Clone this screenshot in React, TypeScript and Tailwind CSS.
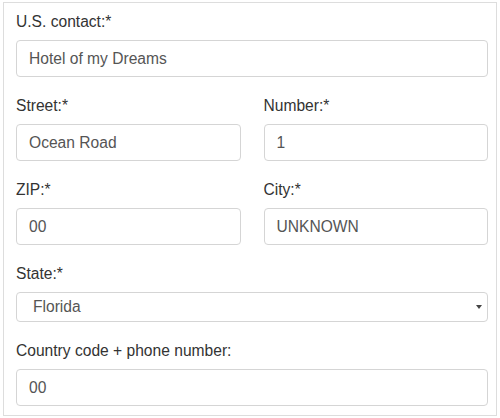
const font = { fontFamily: '"Liberation Sans", Arial, sans-serif' };

function Field({ label, value }: { label: string; value: string }) {
    return (
        <div className="mb-[18px]">
            <label className="block text-[15.6px] leading-[22px] mb-[7px] text-[#333]">{label}</label>
            <input
                readOnly
                value={value}
                className="block w-full h-[37px] px-[12px] border border-[#d5d5d5] rounded-[4px] bg-white text-[15.6px] text-[#555] outline-none"
            />
        </div>
    );
}

export default function App() {
    return (
        <div className="bg-white w-[500px] h-[418px]" style={font}>
            <div className="ml-[3px] mt-[2px] w-[494px] border border-[#ddd] pt-[8px] pl-[12px] pr-[8px] pb-[9px]">
                <Field label="U.S. contact:*" value="Hotel of my Dreams" />
                <div className="grid grid-cols-2 gap-x-[23px]">
                    <Field label="Street:*" value="Ocean Road" />
                    <Field label="Number:*" value="1" />
                    <Field label="ZIP:*" value="00" />
                    <Field label="City:*" value="UNKNOWN" />
                </div>
                <div className="mb-[18px]">
                    <label className="block text-[15.6px] leading-[22px] mb-[7px] text-[#333]">State:*</label>
                    <div className="relative">
                        <select
                            defaultValue="Florida"
                            className="block w-full h-[30px] pl-[16px] pr-[24px] border border-[#d5d5d5] rounded-[4px] bg-white text-[15.6px] text-[#555] appearance-none outline-none"
                        >
                            <option>Florida</option>
                        </select>
                        <svg className="absolute right-[6px] top-[13px]" width="6" height="5" viewBox="0 0 6 5">
                            <path d="M0 0 H6 L3 4 Z" fill="#444" />
                        </svg>
                    </div>
                </div>
                <div>
                    <label className="block text-[15.6px] leading-[22px] mb-[7px] text-[#333]">Country code + phone number:</label>
                    <input
                        readOnly
                        value="00"
                        className="block w-full h-[37px] px-[12px] border border-[#d5d5d5] rounded-[4px] bg-white text-[15.6px] text-[#555] outline-none"
                    />
                </div>
            </div>
        </div>
    );
}
